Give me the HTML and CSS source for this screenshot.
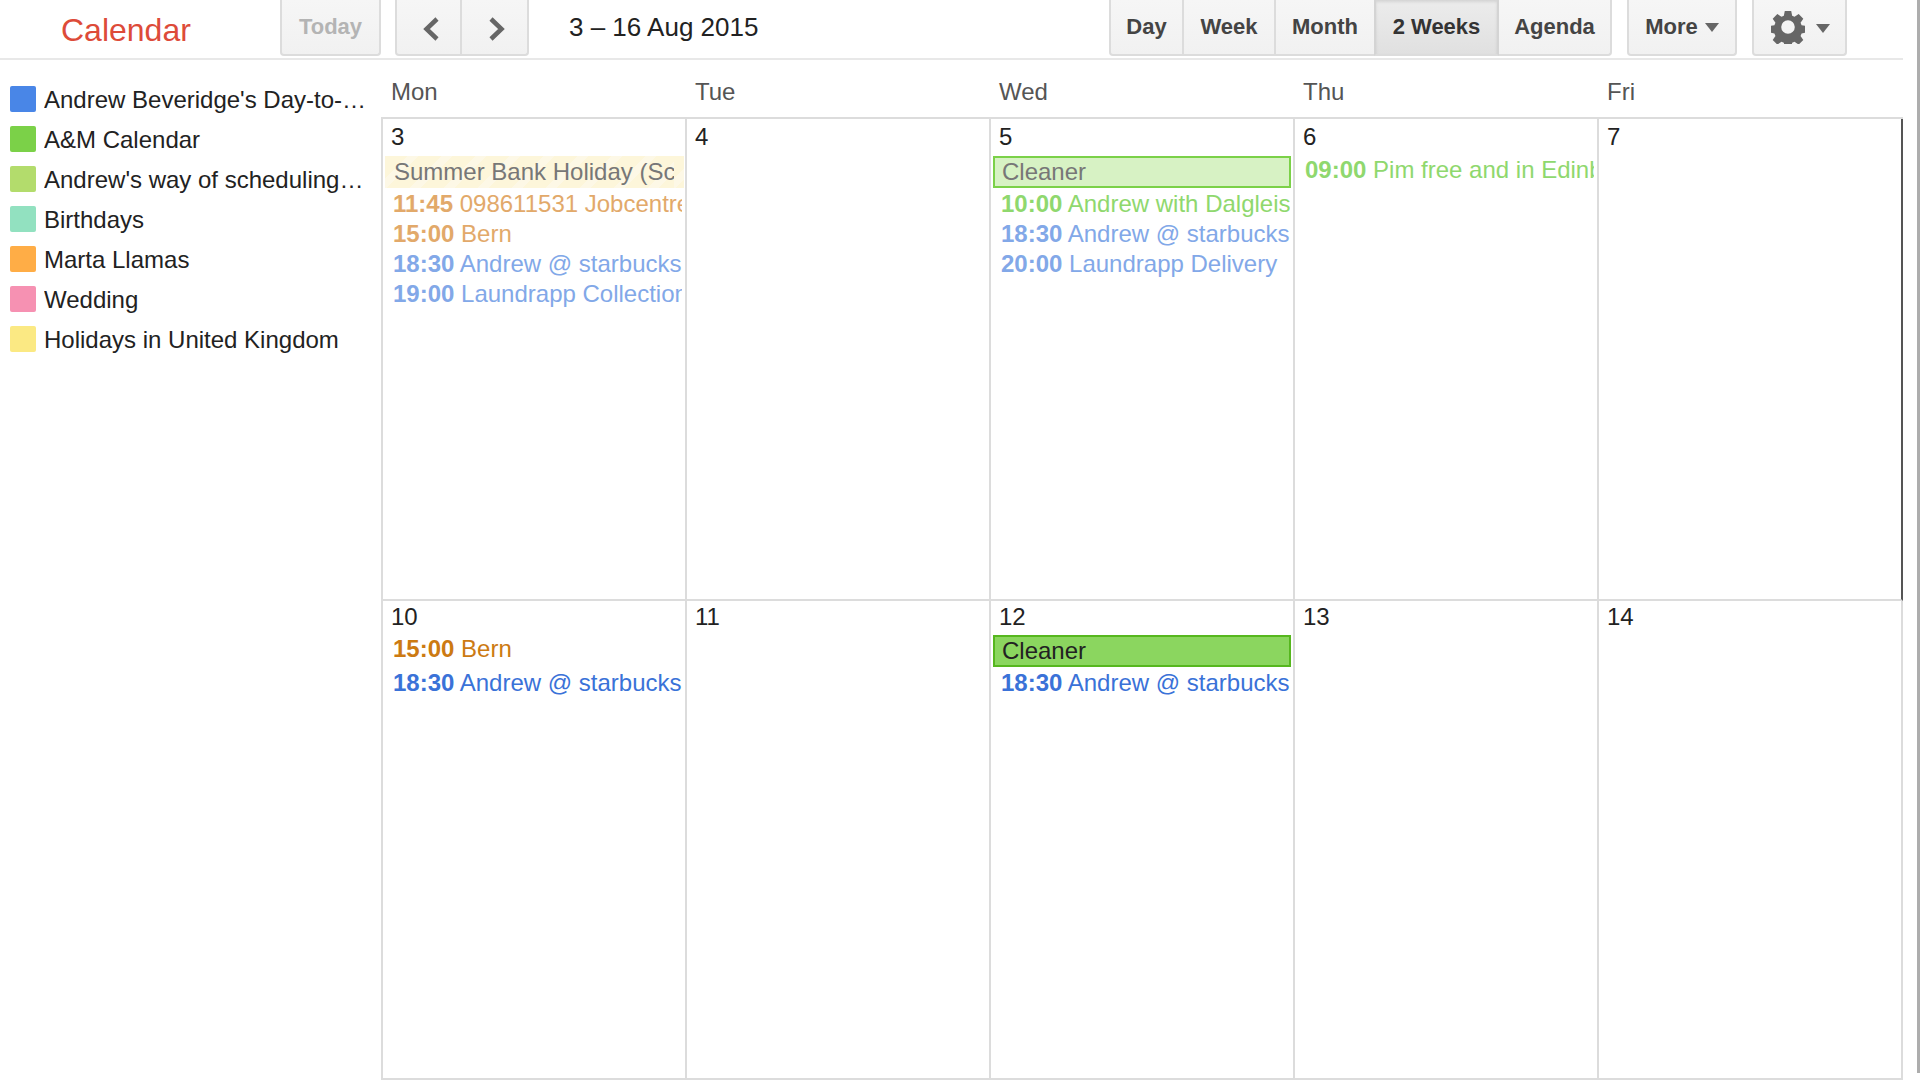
FILE: index.html
```html
<!DOCTYPE html>
<html lang="en">
<head>
<meta charset="utf-8">
<title>Calendar</title>
<link rel="stylesheet" href="styles.css">
</head>
<body>
<div class="page">
  <div class="app">
    <header class="topbar">
      <div class="brand">Calendar</div>
      <div class="btn-group today-group"><button class="btn today">Today</button></div>
      <div class="btn-group nav-group">
        <button class="btn nav-btn" aria-label="Previous">
          <svg class="chevron" viewBox="0 0 16 24"><path d="M14 2 L3.500 12 L14 22"/></svg>
        </button>
        <button class="btn nav-btn" aria-label="Next">
          <svg class="chevron" viewBox="0 0 16 24"><path d="M2 2 L12.500 12 L2 22"/></svg>
        </button>
      </div>
      <div class="range">3 – 16 Aug 2015</div>
      <div class="btn-group views">
        <button class="btn view-day">Day</button>
        <button class="btn view-week">Week</button>
        <button class="btn view-month">Month</button>
        <button class="btn view-2w active">2 Weeks</button>
        <button class="btn view-agenda">Agenda</button>
      </div>
      <div class="btn-group more-group"><button class="btn more">More<span class="caret"></span></button></div>
      <div class="btn-group gear-group">
        <button class="btn gear" aria-label="Settings">
          <svg class="gear-icon" viewBox="0 0 36 36">
            <path fill-rule="evenodd" d="M14.600 1h6.800l1 5.100 2.500 1.100 4.400-2.900 4.900 4.900-2.900 4.400 1.100 2.500 5.100 1v6.800l-5.100 1-1.100 2.500 2.900 4.300-4.900 4.900-4.400-2.900-2.500 1.100-1 5.100h-6.800l-1-5.100-2.500-1.100-4.400 2.900-4.900-4.900 2.900-4.300-1.100-2.500-5.100-1v-6.800l5.100-1 1.100-2.500-2.900-4.400 4.900-4.900 4.400 2.900 2.500-1.100zM18 10.800a7.200 7.200 0 1 0 0 14.400a7.200 7.200 0 1 0 0-14.400z"/>
          </svg>
          <span class="caret"></span>
        </button>
      </div>
    </header>
    <div class="main">
      <aside class="sidebar">
        <div class="cal-row"><span class="swatch s-blue"></span><span class="cal-name">Andrew Beveridge's Day-to-Day Calendar</span></div>
        <div class="cal-row"><span class="swatch s-green"></span><span class="cal-name">A&amp;M Calendar</span></div>
        <div class="cal-row"><span class="swatch s-lime"></span><span class="cal-name">Andrew's way of scheduling things</span></div>
        <div class="cal-row"><span class="swatch s-mint"></span><span class="cal-name">Birthdays</span></div>
        <div class="cal-row"><span class="swatch s-orange"></span><span class="cal-name">Marta Llamas</span></div>
        <div class="cal-row"><span class="swatch s-pink"></span><span class="cal-name">Wedding</span></div>
        <div class="cal-row"><span class="swatch s-yellow"></span><span class="cal-name">Holidays in United Kingdom</span></div>
      </aside>
      <section class="calendar">
        <div class="weekdays">
          <div>Mon</div><div>Tue</div><div>Wed</div><div>Thu</div><div>Fri</div>
        </div>
        <div class="weeks">
          <div class="cell">
            <div class="num">3</div>
            <div class="bar bar-holiday">Summer Bank Holiday (Scotland)</div>
            <div class="event c-orange-pale"><b>11:45</b> 098611531 Jobcentre Plus</div>
            <div class="event c-orange-pale"><b>15:00</b> Bern</div>
            <div class="event c-blue-pale"><b>18:30</b> Andrew @ starbucks</div>
            <div class="event c-blue-pale"><b>19:00</b> Laundrapp Collection</div>
          </div>
          <div class="cell"><div class="num">4</div></div>
          <div class="cell">
            <div class="num">5</div>
            <div class="bar bar-cleaner-pale">Cleaner</div>
            <div class="event c-green-pale"><b>10:00</b> Andrew with Dalgleish</div>
            <div class="event c-blue-pale"><b>18:30</b> Andrew @ starbucks</div>
            <div class="event c-blue-pale"><b>20:00</b> Laundrapp Delivery</div>
          </div>
          <div class="cell">
            <div class="num">6</div>
            <div class="event c-green-pale raised"><b>09:00</b> Pim free and in Edinburgh</div>
          </div>
          <div class="cell cell-dark"><div class="num">7</div></div>

          <div class="cell week2">
            <div class="num">10</div>
            <div class="event c-orange raised spaced"><b>15:00</b> Bern</div>
            <div class="event c-blue"><b>18:30</b> Andrew @ starbucks</div>
          </div>
          <div class="cell week2"><div class="num">11</div></div>
          <div class="cell week2">
            <div class="num">12</div>
            <div class="bar bar-cleaner">Cleaner</div>
            <div class="event c-blue"><b>18:30</b> Andrew @ starbucks</div>
          </div>
          <div class="cell week2"><div class="num">13</div></div>
          <div class="cell week2"><div class="num">14</div></div>
        </div>
      </section>
    </div>
  </div>
  <div class="scrollbar"></div>
</div>
</body>
</html>
```

FILE: styles.css
```css
* { box-sizing: border-box; }

html, body {
  margin: 0;
  height: 100%;
  overflow: hidden;
  background: #fff;
}

body {
  font-family: "Liberation Sans", Arial, sans-serif;
  font-size: 24px;
  color: #222;
}

.page {
  display: flex;
  align-items: flex-start;
  width: 1920px;
  height: 1080px;
}

.app {
  width: 1903px;
  height: 1080px;
  display: flex;
  flex-direction: column;
  flex: none;
}

.scrollbar {
  width: 3px;
  height: 1073px;
  margin-left: 14px;
  background: #adadad;
  flex: none;
}

/* Top bar */
.topbar {
  display: flex;
  align-items: flex-start;
  height: 60px;
  flex: none;
  border-bottom: 2px solid #e8e8e8;
  padding-right: 56px;
}

.brand {
  width: 280px;
  padding-left: 61px;
  font-size: 32px;
  line-height: 60px;
  color: #dd4b39;
  flex: none;
}

.btn-group {
  display: flex;
  height: 56px;
  flex: none;
}

.btn {
  height: 56px;
  padding: 0;
  margin: 0;
  display: flex;
  align-items: center;
  justify-content: center;
  font-family: inherit;
  font-size: 22px;
  font-weight: bold;
  line-height: 52px;
  color: #444;
  background: linear-gradient(#f6f6f6, #f1f1f1);
  border: 2px solid #dcdcdc;
  border-top: 0;
  border-left-width: 0;
}

.btn-group .btn:first-child {
  border-left-width: 2px;
  border-bottom-left-radius: 4px;
}

.btn-group .btn:last-child {
  border-bottom-right-radius: 4px;
}

.today-group { margin-right: 14px; }

.today {
  width: 101px;
  color: #b4b4b4;
}

.nav-btn { width: 67px; }

.chevron {
  width: 16px;
  height: 24px;
  margin: 3px 0 0 5px;
  fill: none;
  stroke: #666;
  stroke-width: 4.5;
  stroke-linejoin: miter;
}

.range {
  margin-left: 40px;
  font-size: 26px;
  line-height: 54px;
  color: #222;
}

.views { margin-left: auto; }

.view-day { width: 75px; }
.view-week { width: 92px; }
.view-month { width: 100px; }
.view-2w { width: 123px; }
.view-agenda { width: 113px; }

.btn.active {
  color: #333;
  background: linear-gradient(#ececec, #e0e0e0);
  box-shadow: inset 0 2px 3px rgba(0, 0, 0, 0.1);
  border-left: 2px solid #d4d4d4;
  border-right: 2px solid #d4d4d4;
  margin-left: -2px;
  width: 125px;
}

.more-group { margin-left: 15px; }

.more {
  width: 110px;
  gap: 7px;
}

.gear-group { margin-left: 15px; }

.gear {
  width: 95px;
  justify-content: flex-start;
  padding: 0 0 0 17px;
}

.gear-icon {
  width: 34px;
  height: 34px;
  fill: #666;
  flex: none;
}

.gear .caret { margin-left: 11px; margin-top: 2px; }

.caret {
  display: block;
  width: 0;
  height: 0;
  border-left: 7px solid transparent;
  border-right: 7px solid transparent;
  border-top: 9px solid #666;
  flex: none;
}

/* Body */
.main {
  display: flex;
  flex: 1;
  min-height: 0;
}

.sidebar {
  width: 381px;
  flex: none;
  padding: 26px 0 0 10px;
}

.cal-row {
  display: flex;
  align-items: flex-start;
  gap: 8px;
  height: 40px;
}

.swatch {
  width: 26px;
  height: 26px;
  border-radius: 2px;
  flex: none;
}

.s-blue { background: #4986e7; }
.s-green { background: #7bd148; }
.s-lime { background: #b3dc6c; }
.s-mint { background: #92e1c0; }
.s-orange { background: #ffad46; }
.s-pink { background: #f691b2; }
.s-yellow { background: #fbe983; }

.cal-name {
  width: 326px;
  line-height: 28px;
  white-space: nowrap;
  overflow: hidden;
  text-overflow: ellipsis;
  color: #222;
}

.calendar {
  width: 1522px;
  flex: none;
  display: flex;
  flex-direction: column;
}

.weekdays {
  display: grid;
  grid-template-columns: repeat(5, 304px);
  height: 57px;
  padding: 18px 0 0 10px;
  line-height: 28px;
  color: #555;
  flex: none;
}

.weeks {
  display: grid;
  grid-template-columns: repeat(5, 304px);
  grid-template-rows: 482px 479px;
  border-left: 2px solid #dcdcdc;
  border-top: 2px solid #dcdcdc;
  width: 1522px;
  flex: none;
}

.cell {
  border-right: 2px solid #dcdcdc;
  border-bottom: 2px solid #dcdcdc;
  overflow: hidden;
  min-width: 0;
}

.cell-dark { border-right-color: #555; }

.num {
  height: 37px;
  padding-left: 8px;
  line-height: 36px;
  color: #222;
}

.week2 .num {
  height: 34px;
  line-height: 32px;
}

.bar {
  height: 32px;
  margin: 0 2px 0 2px;
  padding-left: 9px;
  line-height: 32px;
  white-space: nowrap;
  overflow: hidden;
}

.bar + .event { margin-top: 1px; }

.bar-holiday {
  margin-right: 1px;
  border-right: 10px solid transparent;
  color: #777;
  background: repeating-linear-gradient(135deg, #fdf6da, #fdf6da 16px, #fdf8e6 16px, #fdf8e6 24px);
}

.bar-cleaner-pale {
  padding-left: 7px;
  color: #777;
  background: #d7f2c4;
  border: 2px solid #7bd148;
  line-height: 28px;
}

.bar-cleaner {
  padding-left: 7px;
  color: #222;
  background: #8bd65f;
  border: 2px solid #56b71e;
  line-height: 28px;
}

.event {
  height: 30px;
  margin-right: 3px;
  padding-left: 10px;
  line-height: 30px;
  white-space: nowrap;
  overflow: hidden;
}

.raised { margin-top: -1px; }
.spaced { margin-bottom: 4px; }

.c-orange-pale { color: #e2a96a; }
.c-blue-pale { color: #82a8e8; }
.c-green-pale { color: #8fd86e; }
.c-orange { color: #cc7a12; }
.c-blue { color: #3a72d8; }
```
